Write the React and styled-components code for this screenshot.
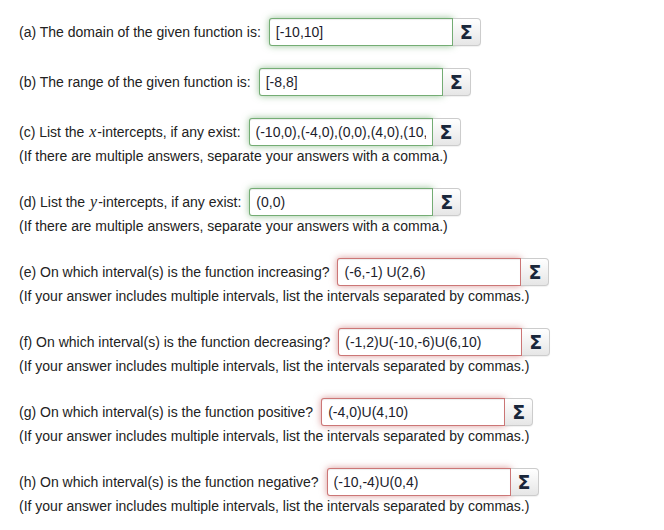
import React from "react";
import styled, { createGlobalStyle, css } from "styled-components";

const Global = createGlobalStyle`
  html, body { margin: 0; padding: 0; background: #fff; }
  body { font-family: "Liberation Sans", Arial, sans-serif; font-size: 14px; color: #222; }
`;

const Page = styled.div`
  padding: 18px 0 0 19px;
  display: flex;
  flex-direction: column;
  gap: 22px;
`;

const Block = styled.div`
  display: flex;
  flex-direction: column;
`;

const Row = styled.div`
  display: flex;
  align-items: center;
  gap: 8px;
  height: 28px;
`;

const Label = styled.span`
  white-space: nowrap;
  line-height: 20px;
`;

const MathVar = styled.span`
  font-family: "Liberation Serif", "DejaVu Serif", serif;
  font-style: italic;
  font-size: 16px;
  padding: 0 1px;
`;

const Group = styled.div`
  display: flex;
  align-items: stretch;
  height: 28px;
`;

const Answer = styled.input`
  box-sizing: border-box;
  width: 184px;
  height: 28px;
  padding: 0 6px;
  margin: 0;
  font-family: "Liberation Sans", Arial, sans-serif;
  font-size: 14px;
  color: #1c1c2c;
  background: #fff;
  border: 1px solid;
  border-radius: 3px 0 0 3px;
  outline: none;
  ${(p) =>
    p.$correct
      ? css`
          border-color: rgba(81, 153, 81, 0.8);
          box-shadow: inset 0 1px 1px rgba(0, 0, 0, 0.075), 0 0 7px rgba(81, 153, 81, 0.6);
        `
      : css`
          border-color: rgba(191, 84, 84, 0.8);
          box-shadow: inset 0 1px 1px rgba(0, 0, 0, 0.075), 0 0 7px rgba(191, 84, 84, 0.6);
        `}
`;

const SigmaButton = styled.button`
  box-sizing: border-box;
  width: 28px;
  height: 28px;
  margin: 0;
  padding: 0;
  border: 1px solid #ccc;
  border-left: none;
  border-radius: 0 4px 4px 0;
  background: linear-gradient(to bottom, #ffffff 0%, #e6e6e6 100%);
  box-shadow: 0 1px 1px rgba(0, 0, 0, 0.06);
  font-family: "DejaVu Sans", "Liberation Sans", sans-serif;
  font-weight: bold;
  font-size: 19px;
  line-height: 26px;
  color: #18263a;
  text-align: center;
  cursor: pointer;
`;

const Note = styled.div`
  line-height: 20px;
  white-space: nowrap;
`;

const NOTE_MULTI = "(If there are multiple answers, separate your answers with a comma.)";
const NOTE_INT = "(If your answer includes multiple intervals, list the intervals separated by commas.)";

const items = [
  { label: <>(a) The domain of the given function is:</>, value: "[-10,10]", correct: true },
  { label: <>(b) The range of the given function is:</>, value: "[-8,8]", correct: true },
  {
    label: <>(c) List the <MathVar>x</MathVar>-intercepts, if any exist:</>,
    value: "(-10,0),(-4,0),(0,0),(4,0),(10,0)",
    correct: true,
    note: NOTE_MULTI,
  },
  {
    label: <>(d) List the <MathVar>y</MathVar>-intercepts, if any exist:</>,
    value: "(0,0)",
    correct: true,
    note: NOTE_MULTI,
  },
  { label: <>(e) On which interval(s) is the function increasing?</>, value: "(-6,-1) U(2,6)", correct: false, note: NOTE_INT },
  { label: <>(f) On which interval(s) is the function decreasing?</>, value: "(-1,2)U(-10,-6)U(6,10)", correct: false, note: NOTE_INT },
  { label: <>(g) On which interval(s) is the function positive?</>, value: "(-4,0)U(4,10)", correct: false, note: NOTE_INT },
  { label: <>(h) On which interval(s) is the function negative?</>, value: "(-10,-4)U(0,4)", correct: false, note: NOTE_INT },
];

export default function App() {
  return (
    <>
      <Global />
      <Page>
        {items.map((it, i) => (
          <Block key={i}>
            <Row>
              <Label>{it.label}</Label>
              <Group>
                <Answer type="text" readOnly defaultValue={it.value} $correct={it.correct} />
                <SigmaButton type="button">Σ</SigmaButton>
              </Group>
            </Row>
            {it.note && <Note>{it.note}</Note>}
          </Block>
        ))}
      </Page>
    </>
  );
}
